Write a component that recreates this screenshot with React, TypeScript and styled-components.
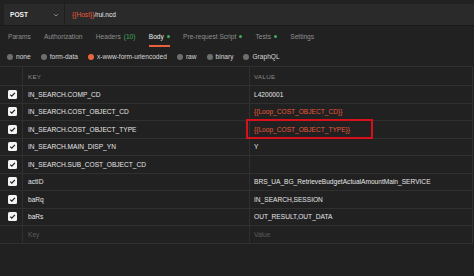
import styled, { createGlobalStyle } from 'styled-components';

const GlobalStyle = createGlobalStyle`
  body {
    margin: 0;
    background: #212121;
    font-family: "Liberation Sans", Arial, sans-serif;
    color: #dcdcdc;
  }
`;

const Page = styled.div`
  width: 474px;
  height: 276px;
  overflow: hidden;
  background: #212121;
`;

const TopBar = styled.div`
  padding: 4px 0 0 4px;
  border-bottom: 1px solid #1a1a1a;
`;

const UrlBar = styled.div`
  display: flex;
  height: 21px;
  background: #2a2a2a;
`;

const MethodBox = styled.div`
  width: 61px;
  display: flex;
  align-items: center;
  justify-content: space-between;
  padding: 0 5px 0 6px;
  box-sizing: border-box;
  border-right: 1px solid #1e1e1e;
  font-size: 6.6px;
  font-weight: bold;
  color: #f2f2f2;
`;

const UrlInput = styled.div`
  flex: 1;
  display: flex;
  align-items: center;
  padding-left: 7px;
  font-size: 6.6px;
  color: #e8e8e8;
`;

const Variable = styled.span`
  color: #e8583a;
`;

const Tabs = styled.div`
  display: flex;
  gap: 13.3px;
  height: 21px;
  padding-left: 8px;
  align-items: stretch;
`;

const Tab = styled.div<{ $active?: boolean }>`
  display: flex;
  align-items: center;
  gap: 3px;
  font-size: 6.6px;
  color: ${(p) => (p.$active ? '#f0f0f0' : '#8e8e8e')};
  border-bottom: 2px solid ${(p) => (p.$active ? '#e8623b' : 'transparent')};
  padding-top: 2px;
  box-sizing: border-box;
`;

const Count = styled.span`
  color: #3fae5a;
`;

const Dot = styled.span`
  width: 3px;
  height: 3px;
  border-radius: 50%;
  background: #3fae5a;
`;

const Radios = styled.div`
  display: flex;
  gap: 10px;
  height: 19px;
  align-items: center;
  padding-left: 7px;
`;

const Radio = styled.div<{ $selected?: boolean }>`
  display: flex;
  align-items: center;
  gap: 3px;
  font-size: 6.6px;
  color: #d8d8d8;

  &::before {
    content: '';
    width: 6px;
    height: 6px;
    border-radius: 50%;
    background: ${(p) => (p.$selected ? '#e8653e' : '#6e6e6e')};
  }
`;

const Table = styled.div`
  width: 473px;
  border-top: 1px solid #303030;
  border-right: 1px solid #303030;
  box-sizing: border-box;
`;

const Row = styled.div<{ $head?: boolean }>`
  display: grid;
  grid-template-columns: 23px 226px 1fr;
  height: ${(p) => (p.$head ? '19px' : '17.5px')};
  border-bottom: 1px solid #303030;
  box-sizing: border-box;
`;

const CheckCell = styled.div`
  display: flex;
  align-items: center;
  justify-content: center;
  padding-left: 2px;
  border-right: 1px solid #303030;
`;

const Cell = styled.div<{ $head?: boolean; $muted?: boolean; $var?: boolean }>`
  position: relative;
  display: flex;
  align-items: center;
  padding-left: 5px;
  font-size: ${(p) => (p.$head ? '6.2px' : '6.6px')};
  letter-spacing: ${(p) => (p.$head ? '0.3px' : '0')};
  color: ${(p) => (p.$head ? '#8a8a8a' : p.$muted ? '#5c5c5c' : p.$var ? '#e8583a' : '#e6e6e6')};
  white-space: nowrap;

  & + & {
    border-left: 1px solid #303030;
    padding-left: 4px;
  }
`;

const Highlight = styled.div`
  position: absolute;
  left: -4px;
  top: -2px;
  width: 127px;
  height: 20px;
  border: 2px solid #d8101c;
  box-sizing: border-box;
`;

const CheckBox = styled.div`
  width: 9px;
  height: 9px;
  border-radius: 1.5px;
  background: #f4f4f4;
  display: flex;
  align-items: center;
  justify-content: center;
`;

const Check = () => (
  <CheckBox>
    <svg width="7" height="7" viewBox="0 0 10 10">
      <path d="M1.8 5.2 L4 7.4 L8.4 2.6" fill="none" stroke="#222" strokeWidth="1.8" />
    </svg>
  </CheckBox>
);

const Chevron = () => (
  <svg width="6" height="4" viewBox="0 0 6 4">
    <path d="M1 1 L3 3 L5 1" fill="none" stroke="#9a9a9a" strokeWidth="0.8" />
  </svg>
);

type Param = { key: string; value: string; flag?: boolean };

const params: Param[] = [
  { key: 'IN_SEARCH.COMP_CD', value: 'L4200001' },
  { key: 'IN_SEARCH.COST_OBJECT_CD', value: '{{Loop_COST_OBJECT_CD}}' },
  { key: 'IN_SEARCH.COST_OBJECT_TYPE', value: '{{Loop_COST_OBJECT_TYPE}}', flag: true },
  { key: 'IN_SEARCH.MAIN_DISP_YN', value: 'Y' },
  { key: 'IN_SEARCH.SUB_COST_OBJECT_CD', value: '' },
  { key: 'actID', value: 'BRS_UA_BG_RetrieveBudgetActualAmountMain_SERVICE' },
  { key: 'baRq', value: 'IN_SEARCH,SESSION' },
  { key: 'baRs', value: 'OUT_RESULT,OUT_DATA' },
];

const App = (): JSX.Element => (
  <>
    <GlobalStyle />
    <Page>
      <TopBar>
        <UrlBar>
          <MethodBox>
            POST
            <Chevron />
          </MethodBox>
          <UrlInput>
            <Variable>{'{{Host}}'}</Variable>/rui.ncd
          </UrlInput>
        </UrlBar>
      </TopBar>

      <Tabs>
        <Tab>Params</Tab>
        <Tab>Authorization</Tab>
        <Tab>Headers <Count>(10)</Count></Tab>
        <Tab $active>Body <Dot /></Tab>
        <Tab>Pre-request Script <Dot /></Tab>
        <Tab>Tests <Dot /></Tab>
        <Tab>Settings</Tab>
      </Tabs>

      <Radios>
        <Radio>none</Radio>
        <Radio>form-data</Radio>
        <Radio $selected>x-www-form-urlencoded</Radio>
        <Radio>raw</Radio>
        <Radio>binary</Radio>
        <Radio>GraphQL</Radio>
      </Radios>

      <Table>
        <Row $head>
          <CheckCell />
          <Cell $head>KEY</Cell>
          <Cell $head>VALUE</Cell>
        </Row>
        {params.map((p) => (
          <Row key={p.key}>
            <CheckCell><Check /></CheckCell>
            <Cell>{p.key}</Cell>
            <Cell $var={p.value.startsWith('{{')}>
              {p.value}
              {p.flag && <Highlight />}
            </Cell>
          </Row>
        ))}
        <Row>
          <CheckCell />
          <Cell $muted>Key</Cell>
          <Cell $muted>Value</Cell>
        </Row>
      </Table>
    </Page>
  </>
);

export default App;
